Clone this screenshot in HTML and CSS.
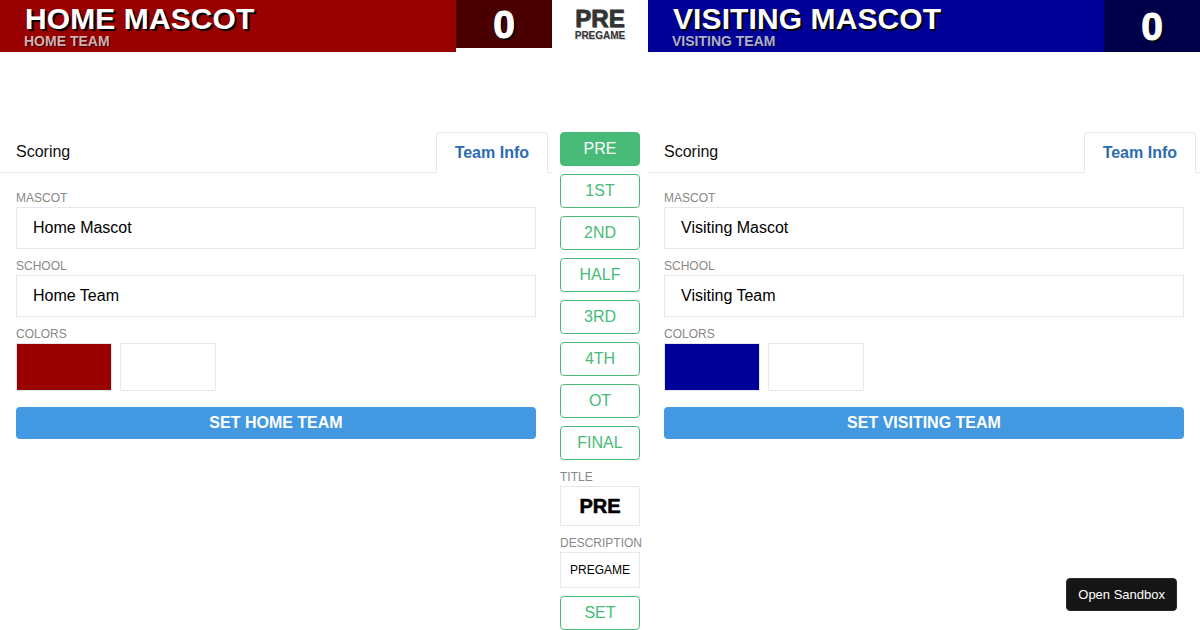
FILE: index.html
```html
<!DOCTYPE html>
<html lang="en">
<head>
<meta charset="utf-8">
<title>Scoreboard Control</title>
<link rel="stylesheet" href="styles.css">
</head>
<body>
<header class="scoreboard">
  <div class="team-name home-bg">
    <div class="mascot">HOME MASCOT</div>
    <div class="school">HOME TEAM</div>
  </div>
  <div class="score home-score">0</div>
  <div class="period">
    <div class="period-title">PRE</div>
    <div class="period-desc">PREGAME</div>
  </div>
  <div class="team-name visit-bg">
    <div class="mascot">VISITING MASCOT</div>
    <div class="school">VISITING TEAM</div>
  </div>
  <div class="score visit-score">0</div>
</header>

<main class="controls">
  <section class="panel">
    <div class="tabs">
      <div class="tab">Scoring</div>
      <div class="tab tab-active">Team Info</div>
    </div>
    <div class="form">
      <div class="group">
        <label class="label">MASCOT</label>
        <div class="input">Home Mascot</div>
      </div>
      <div class="group">
        <label class="label">SCHOOL</label>
        <div class="input">Home Team</div>
      </div>
      <div class="group">
        <label class="label">COLORS</label>
        <div class="swatches">
          <div class="swatch swatch-red"></div>
          <div class="swatch"></div>
        </div>
      </div>
      <button class="set-team">SET HOME TEAM</button>
    </div>
  </section>

  <aside class="periods">
    <button class="pbtn pbtn-active">PRE</button>
    <button class="pbtn">1ST</button>
    <button class="pbtn">2ND</button>
    <button class="pbtn">HALF</button>
    <button class="pbtn">3RD</button>
    <button class="pbtn">4TH</button>
    <button class="pbtn">OT</button>
    <button class="pbtn">FINAL</button>
    <div class="pgroup">
      <label class="label">TITLE</label>
      <div class="pinput pinput-title">PRE</div>
    </div>
    <div class="pgroup">
      <label class="label">DESCRIPTION</label>
      <div class="pinput pinput-desc">PREGAME</div>
    </div>
    <button class="pbtn">SET</button>
  </aside>

  <section class="panel">
    <div class="tabs">
      <div class="tab">Scoring</div>
      <div class="tab tab-active">Team Info</div>
    </div>
    <div class="form">
      <div class="group">
        <label class="label">MASCOT</label>
        <div class="input">Visiting Mascot</div>
      </div>
      <div class="group">
        <label class="label">SCHOOL</label>
        <div class="input">Visiting Team</div>
      </div>
      <div class="group">
        <label class="label">COLORS</label>
        <div class="swatches">
          <div class="swatch swatch-blue"></div>
          <div class="swatch"></div>
        </div>
      </div>
      <button class="set-team">SET VISITING TEAM</button>
    </div>
  </section>
</main>

<button class="sandbox">Open Sandbox</button>
</body>
</html>
```

FILE: styles.css
```css
* { box-sizing: border-box; }

html, body {
  margin: 0;
  padding: 0;
  background: #ffffff;
  font-family: "Liberation Sans", Arial, Helvetica, sans-serif;
  color: #111;
}

body { overflow: hidden; }

/* ---------- scoreboard ---------- */
.scoreboard {
  display: grid;
  grid-template-columns: 456px 96px 96px 456px 96px;
  height: 52px;
}

.team-name {
  height: 52px;
  padding: 4px 0 0 24px;
  color: #fff;
  text-shadow: 2px 2px 0 #000;
  font-weight: bold;
}

.home-bg { background: #990000; }
.visit-bg { background: #000099; }

.mascot {
  font-size: 30px;
  line-height: 30px;
  padding-left: 1px;
  letter-spacing: 0.1px;
}

.school {
  font-size: 14px;
  line-height: 14px;
  color: rgba(255, 255, 255, 0.7);
  text-shadow: 1px 1px 0 rgba(0, 0, 0, 0.6);
}

.score {
  display: flex;
  align-items: center;
  justify-content: center;
  color: #fff;
  font-weight: bold;
  font-size: 39px;
  line-height: 1;
  text-shadow: 2px 2px 0 #000;
  -webkit-text-stroke: 1px #fff;
}

.score-digit {
  display: inline-block;
}

.home-score {
  background: #4a0000;
  height: 48px;
}

.visit-score {
  background: #00004a;
  height: 52px;
}

.period {
  padding-top: 7px;
  text-align: center;
  color: #333;
  font-weight: bold;
}

.period-title {
  font-size: 24px;
  line-height: 24px;
  -webkit-text-stroke: 0.8px #333;
  text-shadow: 1px 1px 0 rgba(0,0,0,0.25);
}

.period-desc {
  font-size: 10px;
  line-height: 10px;
  text-shadow: 1px 1px 0 rgba(0,0,0,0.2);
}

/* ---------- controls ---------- */
.controls {
  display: grid;
  grid-template-columns: 552px 96px 552px;
  margin-top: 80px;
}

.tabs {
  display: flex;
  justify-content: space-between;
  height: 41px;
  border-bottom: 1px solid #e2e8f0;
}

.tab {
  display: flex;
  align-items: center;
  padding: 0 16px;
  font-size: 16px;
  color: #111;
}

.tab-active {
  height: 41px;
  padding: 0 18px;
  margin-right: 4px;
  border: 1px solid #e2e8f0;
  border-bottom-color: #fff;
  border-radius: 4px 4px 0 0;
  background: #fff;
  color: #2b6cb0;
  font-weight: bold;
}

.form {
  padding: 17px 16px 0;
}

.group { margin-bottom: 9px; }

.label {
  display: block;
  font-size: 12px;
  line-height: 16px;
  color: #888;
  margin-bottom: 1px;
  white-space: nowrap;
}

.input {
  height: 42px;
  display: flex;
  align-items: center;
  padding: 0 16px;
  border: 1px solid #e2e8f0;
  font-size: 16px;
  color: #000;
}

.swatches {
  display: flex;
  gap: 8px;
}

.swatch {
  width: 96px;
  height: 48px;
  border: 1px solid #e2e8f0;
  background: #fff;
}

.swatch-red { background: #990000; }
.swatch-blue { background: #000099; }

.set-team {
  display: block;
  width: 100%;
  height: 32px;
  margin-top: 16px;
  border: none;
  border-radius: 4px;
  background: #4299e1;
  color: #fff;
  font-family: inherit;
  font-size: 16px;
  font-weight: bold;
}

/* ---------- periods column ---------- */
.periods {
  display: flex;
  flex-direction: column;
  gap: 8px;
  padding: 0 8px;
}

.pbtn {
  height: 34px;
  width: 100%;
  border: 1px solid #48bb78;
  border-radius: 4px;
  background: #fff;
  color: #48bb78;
  font-family: inherit;
  font-size: 16px;
  padding: 0;
}

.pbtn-active {
  background: #48bb78;
  color: #fff;
}

.pgroup .label {
  margin-top: 1px;
  margin-bottom: 1px;
}

.pinput {
  display: flex;
  align-items: center;
  justify-content: center;
  border: 1px solid #e2e8f0;
  color: #000;
}

.pinput-title {
  height: 40px;
  font-size: 20px;
  font-weight: bold;
  -webkit-text-stroke: 0.6px #000;
}

.pinput-desc {
  height: 36px;
  font-size: 12px;
}

/* ---------- floating ---------- */
.sandbox {
  position: fixed;
  right: 23px;
  bottom: 19px;
  height: 33px;
  padding: 0 11px;
  border: 1px solid #2a2a2a;
  border-radius: 4px;
  background: #151515;
  color: #fff;
  font-family: inherit;
  font-size: 13px;
}
```
